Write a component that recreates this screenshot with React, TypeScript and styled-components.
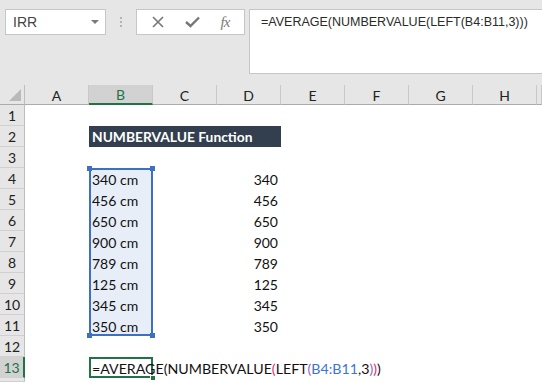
import React from 'react';
import styled, { createGlobalStyle, css } from 'styled-components';

const GlobalStyle = createGlobalStyle`
  html, body {
    margin: 0;
    padding: 0;
    background: #ffffff;
  }
  * {
    box-sizing: border-box;
  }
`;

const Page = styled.div`
  width: 542px;
  height: 382px;
  overflow: hidden;
  background: #e6e6e6;
  display: flex;
  flex-direction: column;
  font-family: Lato, 'Liberation Sans', sans-serif;
`;

const TopBar = styled.div`
  height: 85px;
  flex: none;
  display: flex;
  align-items: flex-start;
  padding: 9px 0 0 5px;
`;

const BoxBase = css`
  background: #ffffff;
  border: 1px solid #c6c6c6;
`;

const NameBox = styled.div`
  ${BoxBase}
  width: 101px;
  height: 26px;
  display: flex;
  align-items: center;
  justify-content: space-between;
  padding: 0 6px 0 7px;
  font-family: 'Liberation Sans', Arial, sans-serif;
  font-size: 14px;
  color: #444444;
`;

const Caret = styled.span`
  width: 0;
  height: 0;
  border-left: 4px solid transparent;
  border-right: 4px solid transparent;
  border-top: 4px solid #7a7a7a;
`;

const Grip = styled.div`
  width: 2px;
  margin: 8px 14px 0 14px;
  display: flex;
  flex-direction: column;
  gap: 2px;

  span {
    width: 2px;
    height: 2px;
    background: #b4b4b4;
  }
`;

const IconBox = styled.div`
  ${BoxBase}
  width: 109px;
  height: 26px;
  display: flex;
  align-items: center;
  justify-content: space-around;
  padding: 0 4px;
`;

const Fx = styled.span`
  font-family: 'Liberation Serif', 'Times New Roman', serif;
  font-style: italic;
  font-size: 15px;
  color: #7a7a7a;
  letter-spacing: -1px;
`;

const FormulaBar = styled.div`
  ${BoxBase}
  flex: 1;
  height: 65px;
  margin-left: 4px;
  margin-right: -6px;
  padding: 5px 11px;
  font-family: 'Liberation Sans', Arial, sans-serif;
  font-size: 12.5px;
  color: #2a2a2a;
`;

const Sheet = styled.div`
  flex: 1;
  display: grid;
  grid-template-columns: 25px repeat(8, 64px) 1fr;
  grid-template-rows: 20px repeat(13, 21px) 1fr;
  background: #ffffff;
`;

const Placed = styled.div<{ $c: string | number; $r: string | number }>`
  grid-column: ${(p) => p.$c};
  grid-row: ${(p) => p.$r};
  min-width: 0;
`;

const Corner = styled(Placed)`
  background: #e6e6e6;
  border-right: 1px solid #bdbdbd;
  border-bottom: 1px solid #ababab;
  position: relative;

  &::after {
    content: '';
    position: absolute;
    right: 3px;
    bottom: 3px;
    width: 0;
    height: 0;
    border-left: 12px solid transparent;
    border-bottom: 12px solid #b9b9b9;
  }
`;

const ColHead = styled(Placed)<{ $active?: boolean }>`
  background: ${(p) => (p.$active ? '#d2d2d2' : '#e6e6e6')};
  color: ${(p) => (p.$active ? '#217346' : '#222222')};
  border-right: 1px solid #c8c8c8;
  border-bottom: ${(p) => (p.$active ? '2px solid #217346' : '1px solid #ababab')};
  display: flex;
  align-items: center;
  justify-content: center;
  padding-top: 1px;
  font-size: 14px;
`;

const RowHead = styled(Placed)<{ $active?: boolean }>`
  background: ${(p) => (p.$active ? '#d2d2d2' : '#e6e6e6')};
  color: ${(p) => (p.$active ? '#217346' : '#222222')};
  border-right: ${(p) => (p.$active ? '2px solid #217346' : '1px solid #bdbdbd')};
  border-bottom: 1px solid #d0d0d0;
  display: flex;
  align-items: center;
  justify-content: center;
  font-size: 14px;
`;

const Title = styled(Placed)`
  background: #333f4f;
  color: #ffffff;
  font-weight: 700;
  font-size: 13.8px;
  display: flex;
  align-items: center;
  padding-left: 3px;
`;

const Range = styled(Placed)`
  position: relative;
  background: #e8eef8;
  box-shadow: inset 0 0 0 2px #3b70c4;
  display: grid;
  grid-template-rows: repeat(8, 21px);
`;

const Handle = styled.span<{ $top?: boolean; $left?: boolean }>`
  position: absolute;
  width: 5px;
  height: 5px;
  background: #3b70c4;
  ${(p) => (p.$top ? 'top: -2px;' : 'bottom: -2px;')}
  ${(p) => (p.$left ? 'left: -2px;' : 'right: -2px;')}
`;

const CellText = styled.div`
  display: flex;
  align-items: center;
  padding: 1px 3px 0 3px;
  font-size: 14px;
  color: #111111;
  white-space: nowrap;
`;

const ValueCell = styled(Placed)`
  display: flex;
  align-items: center;
  justify-content: flex-end;
  padding: 1px 3px 0 3px;
  font-size: 14px;
  color: #111111;
`;

const ActiveCell = styled(Placed)`
  position: relative;
  z-index: 1;
  box-shadow: inset 0 0 0 2px #217346;
  display: flex;
  align-items: center;
  padding: 1px 3px 0 3px;
  font-size: 14.2px;
  color: #111111;
  white-space: nowrap;
  overflow: visible;
`;

const FillHandle = styled.span`
  position: absolute;
  right: -3px;
  bottom: -3px;
  width: 6px;
  height: 6px;
  background: #217346;
  border: 1px solid #ffffff;
`;

const Tok = styled.span<{ $tone: 'red' | 'purple' | 'blue' }>`
  color: ${(p) =>
    p.$tone === 'red' ? '#e0306a' : p.$tone === 'purple' ? '#9b5fc0' : '#3f74d6'};
`;

const TypeCursor = styled.span`
  display: inline-block;
  width: 2px;
  height: 20px;
  background: #111111;
  margin-left: 1px;
`;

const cols = ['A', 'B', 'C', 'D', 'E', 'F', 'G', 'H'];
const data = [340, 456, 650, 900, 789, 125, 345, 350];
const formula = '=AVERAGE(NUMBERVALUE(LEFT(B4:B11,3)))';

const App = () => {
  return (
    <>
      <GlobalStyle />
      <Page>
        <TopBar>
          <NameBox>
            IRR
            <Caret />
          </NameBox>
          <Grip>
            <span />
            <span />
            <span />
          </Grip>
          <IconBox>
            <svg width="12" height="12" viewBox="0 0 12 12">
              <path d="M1 1 L11 11 M11 1 L1 11" stroke="#777" strokeWidth="1.6" fill="none" />
            </svg>
            <svg width="15" height="12" viewBox="0 0 15 12">
              <path d="M1 6 L5.5 10 L14 1.5" stroke="#777" strokeWidth="2.4" fill="none" />
            </svg>
            <Fx>fx</Fx>
          </IconBox>
          <FormulaBar>{formula}</FormulaBar>
        </TopBar>

        <Sheet>
          <Corner $c={1} $r={1} />
          {cols.map((c, i) => (
            <ColHead key={c} $c={i + 2} $r={1} $active={c === 'B'}>
              {c}
            </ColHead>
          ))}
          <ColHead $c={10} $r={1} />

          {Array.from({ length: 14 }, (_, i) => (
            <RowHead key={i} $c={1} $r={i + 2} $active={i + 1 === 13}>
              {i < 13 ? i + 1 : ''}
            </RowHead>
          ))}

          <Title $c="3 / 6" $r={3}>
            NUMBERVALUE Function
          </Title>

          <Range $c={3} $r="5 / 13">
            {data.map((n) => (
              <CellText key={n}>{n} cm</CellText>
            ))}
            <Handle $top $left />
            <Handle $top />
            <Handle $left />
            <Handle />
          </Range>

          {data.map((n, i) => (
            <ValueCell key={n} $c={5} $r={i + 5}>
              {n}
            </ValueCell>
          ))}

          <ActiveCell $c={3} $r={14}>
            =AVERAGE(NUMBERVALUE<Tok $tone="red">(</Tok>LEFT<Tok $tone="purple">(</Tok>
            <Tok $tone="blue">B4:B11</Tok>,3<Tok $tone="purple">)</Tok>
            <Tok $tone="red">)</Tok>)
            <TypeCursor />
            <FillHandle />
          </ActiveCell>
        </Sheet>
      </Page>
    </>
  );
};

export default App;
